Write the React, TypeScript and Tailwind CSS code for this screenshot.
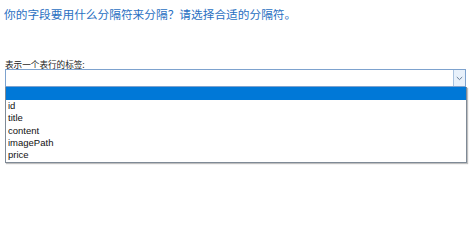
import React from "react";

const ITEMS = ["id", "title", "content", "imagePath", "price"];

export default function App() {
  return (
    <div
      className="w-[474px] h-[207px] bg-white overflow-hidden"
      style={{ fontFamily: '"Liberation Sans", "Noto Sans CJK SC", sans-serif' }}
    >
      {/* Question heading */}
      <div className="pt-[7px] pl-[4px] text-[11.7px] leading-[14px] text-[#2a70c2] font-['Noto_Sans_CJK_SC',sans-serif]">
        你的字段要用什么分隔符来分隔？请选择合适的分隔符。
      </div>

      {/* Label */}
      <div className="mt-[38px] pl-[5px] text-[8.6px] leading-[10px] text-[#222] font-['Noto_Sans_CJK_SC',sans-serif]">
        表示一个表行的标签:
      </div>

      {/* Combo box */}
      <div className="ml-[5px] w-[461px]">
        <div className="flex h-[18px] border border-[#7da2ce] bg-white">
          <div className="flex-1" />
          <div className="w-[12px] flex items-center justify-center border-l border-[#a9c3e0] bg-[#e8f1fb]">
            <svg width="7" height="5" viewBox="0 0 7 5">
              <path d="M0.8 1 L3.5 3.6 L6.2 1" fill="none" stroke="#5a6f8a" strokeWidth="0.9" />
            </svg>
          </div>
        </div>

        {/* Dropdown list */}
        <div className="w-[462px] border border-t-0 border-[#7f8a96] bg-white shadow-[1px_1px_1px_rgba(0,0,0,0.25)]">
          <div className="h-[13px] bg-[#0078d7]" />
          <div className="pl-[2px] pb-[1px]">
            {ITEMS.map((item) => (
              <div key={item} className="h-[12.3px] text-[9.5px] leading-[12.3px] text-[#111]">
                {item}
              </div>
            ))}
          </div>
        </div>
      </div>
    </div>
  );
}
